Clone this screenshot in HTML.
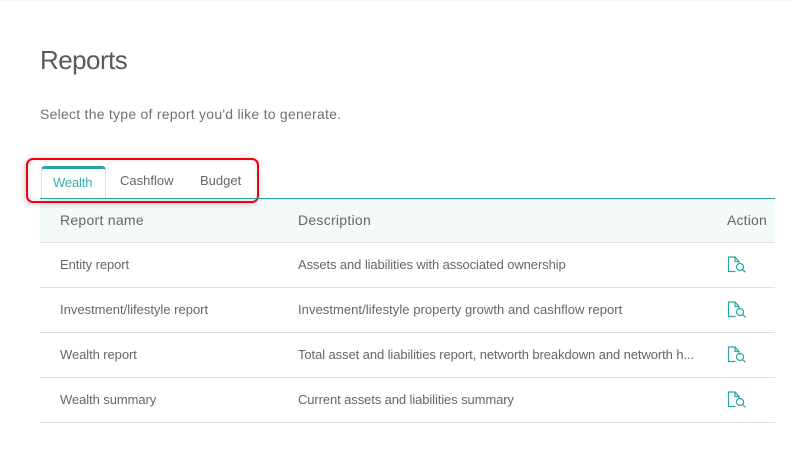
<!DOCTYPE html>
<html>
<head>
<meta charset="utf-8">
<style>
html,body{margin:0;padding:0;background:#fff;width:792px;height:454px;overflow:hidden}
body{position:relative;font-family:"Liberation Sans",sans-serif;color:#595959}
.t{position:absolute;white-space:nowrap;font-size:13px;line-height:16px;color:#666}
.h{font-size:14px;letter-spacing:.27px;color:#666}
.line{position:absolute;left:40px;width:735px;height:1px;background:#dedede}
svg{position:absolute}
</style>
</head>
<body>
<div style="position:absolute;left:0;top:0;width:792px;height:1px;background:#f7f7f7"></div>
<div class="t" style="left:40px;top:45px;font-size:26px;line-height:30px;color:#5a5a5a;letter-spacing:-.55px">Reports</div>
<div class="t" style="left:40px;top:106px;font-size:14px;color:#707070;letter-spacing:.25px">Select the type of report you'd like to generate.</div>

<div style="position:absolute;left:40px;top:199px;width:735px;height:43px;background:#f4f9f9"></div>
<div style="position:absolute;left:26px;top:158px;width:229px;height:41px;border:2px solid #f0000e;border-radius:7px;box-shadow:-1px 1px 6px rgba(0,0,0,.22),inset 1px 0 6px rgba(0,0,0,.1)"></div>
<div style="position:absolute;left:41px;top:166px;width:63px;height:29px;background:#fff;border:1px solid #dcdcdc;border-top:3px solid #25a39c;border-bottom:none;border-radius:4px 4px 0 0"></div>
<div style="position:absolute;left:40px;top:198px;width:735px;height:1px;background:#2aa59f"></div>
<div class="t" style="left:53px;top:175px;color:#3bada7;letter-spacing:-.15px">Wealth</div>
<div class="t" style="left:120px;top:173px">Cashflow</div>
<div class="t" style="left:200px;top:173px">Budget</div>

<div class="t h" style="left:60px;top:212px">Report name</div>
<div class="t h" style="left:298px;top:212px">Description</div>
<div class="t h" style="left:727px;top:212px;letter-spacing:.17px">Action</div>
<div class="line" style="top:242px"></div>

<div class="t" style="left:60px;top:257px;letter-spacing:-.08px">Entity report</div>
<div class="t" style="left:298px;top:257px;letter-spacing:-.1px">Assets and liabilities with associated ownership</div>
<div class="line" style="top:287px"></div>

<div class="t" style="left:60px;top:302px">Investment/lifestyle report</div>
<div class="t" style="left:298px;top:302px;letter-spacing:.05px">Investment/lifestyle property growth and cashflow report</div>
<div class="line" style="top:332px"></div>

<div class="t" style="left:60px;top:347px;letter-spacing:-.08px">Wealth report</div>
<div class="t" style="left:298px;top:347px;letter-spacing:-.09px">Total asset and liabilities report, networth breakdown and networth h...</div>
<div class="line" style="top:377px"></div>

<div class="t" style="left:60px;top:392px;letter-spacing:-.08px">Wealth summary</div>
<div class="t" style="left:298px;top:392px;letter-spacing:-.1px">Current assets and liabilities summary</div>
<div class="line" style="top:422px"></div>

<svg style="left:727px;top:256px" width="20" height="18" viewBox="0 0 20 18" fill="none" stroke="#2aa59f" stroke-width="1.2"><path d="M8.500 15.500H1.500V1H8l4 4.500V7M8 1v4.500h4"/><circle cx="13" cy="11" r="3.500"/><path d="M15.500 13.500l3 2.800"/></svg>
<svg style="left:727px;top:301px" width="20" height="18" viewBox="0 0 20 18" fill="none" stroke="#2aa59f" stroke-width="1.2"><path d="M8.500 15.500H1.500V1H8l4 4.500V7M8 1v4.500h4"/><circle cx="13" cy="11" r="3.500"/><path d="M15.500 13.500l3 2.800"/></svg>
<svg style="left:727px;top:346px" width="20" height="18" viewBox="0 0 20 18" fill="none" stroke="#2aa59f" stroke-width="1.2"><path d="M8.500 15.500H1.500V1H8l4 4.500V7M8 1v4.500h4"/><circle cx="13" cy="11" r="3.500"/><path d="M15.500 13.500l3 2.800"/></svg>
<svg style="left:727px;top:391px" width="20" height="18" viewBox="0 0 20 18" fill="none" stroke="#2aa59f" stroke-width="1.2"><path d="M8.500 15.500H1.500V1H8l4 4.500V7M8 1v4.500h4"/><circle cx="13" cy="11" r="3.500"/><path d="M15.500 13.500l3 2.800"/></svg>
</body>
</html>
